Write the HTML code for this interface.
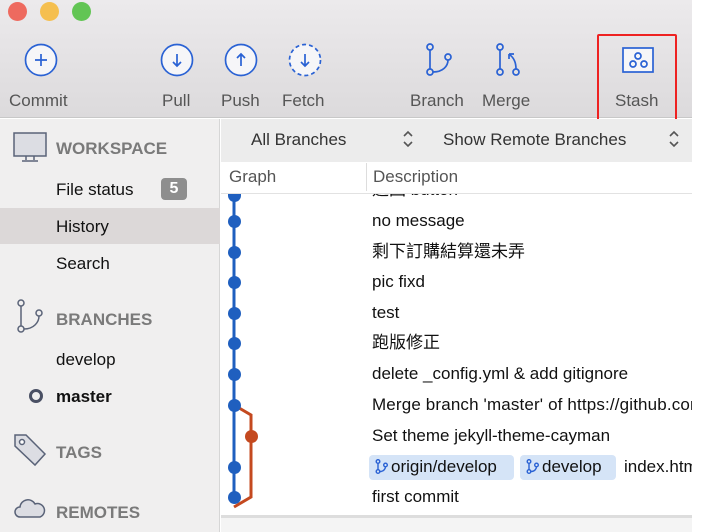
<!DOCTYPE html>
<html><head><meta charset="utf-8"><style>
*{margin:0;padding:0;box-sizing:border-box}
body{width:706px;height:532px;overflow:hidden;background:#fff;font-family:"Liberation Sans","Noto Sans CJK TC",sans-serif;position:relative}
.a{position:absolute}
#tb{left:0;top:0;width:692px;height:118px;background:linear-gradient(#eceaec,#dcdadc);border-bottom:1px solid #c8c8c8}
.lbl{font-size:17px;color:#555;top:91px}
#sb{left:0;top:119px;width:220px;height:413px;background:#f0efef;border-right:1px solid #d6d6d6}
.sh{font-size:17px;color:#7a7a7a;font-weight:bold;left:56px}
.si{font-size:17px;color:#111;left:56px}
.row{left:372px;font-size:17px;line-height:20px;height:20px;color:#111;white-space:nowrap}
.dot{width:13px;height:13px;border-radius:50%;background:#1f5fbf;left:228px}
.tag{background:#d5e4f7;border-radius:4px;height:25px;top:455px;font-size:17px;line-height:20px;color:#111;padding:2px 6px 0 6px;white-space:nowrap}
.tag svg{vertical-align:-2px;margin-right:3px}
</style></head><body>
<div id="tb" class="a">
 <div class="a" style="left:8px;top:2px;width:19px;height:19px;border-radius:50%;background:#ee6a5f"></div>
 <div class="a" style="left:40px;top:2px;width:19px;height:19px;border-radius:50%;background:#f5bf4f"></div>
 <div class="a" style="left:72px;top:2px;width:19px;height:19px;border-radius:50%;background:#62c554"></div>
 <svg class="a" style="left:0;top:40px" width="692" height="40" fill="none" stroke="#2a62d4" stroke-width="1.7">
  <circle cx="41" cy="20" r="15.5" fill="#f6f6f8"/><path d="M41 14v12M35 20h12"/>
  <circle cx="177" cy="20" r="15.5" fill="#f6f6f8"/><path d="M177 14v12M173 22l4 4 4-4"/>
  <circle cx="241" cy="20" r="15.5" fill="#f6f6f8"/><path d="M241 26v-12M237 18l4-4 4 4"/>
  <circle cx="305" cy="20" r="15.5" fill="#f6f6f8" stroke-dasharray="4 3"/><path d="M305 14v12M301 22l4 4 4-4"/>
  <circle cx="430" cy="7" r="3"/><circle cx="430" cy="32" r="3"/><circle cx="448" cy="17" r="3"/><path d="M430 10v19M433 32c10 0 15-6 15-12"/>
  <circle cx="500" cy="7" r="3"/><circle cx="500" cy="32" r="3"/><circle cx="516" cy="32" r="3"/><path d="M500 10v19M516 29c0-6-2-11-6-14M509 14v5M509 14h5"/>
  <rect x="623" y="8" width="30" height="24" fill="#f6f6f8"/><circle cx="638" cy="16" r="3"/><circle cx="633" cy="24" r="3"/><circle cx="644" cy="24" r="3"/>
 </svg>
 <div class="a lbl" style="left:9px">Commit</div>
 <div class="a lbl" style="left:162px">Pull</div>
 <div class="a lbl" style="left:221px">Push</div>
 <div class="a lbl" style="left:282px">Fetch</div>
 <div class="a lbl" style="left:410px">Branch</div>
 <div class="a lbl" style="left:482px">Merge</div>
 <div class="a lbl" style="left:615px">Stash</div>
 <div class="a" style="left:597px;top:34px;width:80px;height:87px;border:2px solid #ee2222;border-radius:2px"></div>
</div>
<div id="sb" class="a">
 <svg class="a" style="left:13px;top:13px" width="36" height="32" fill="#dcdde3" stroke="#5a6378" stroke-width="1.5"><rect x="1" y="1" width="32" height="23"/><path d="M13 24v4M21 24v4M9 29h16"/></svg>
 <div class="a sh" style="top:20px">WORKSPACE</div>
 <div class="a si" style="top:61px">File status</div>
 <div class="a" style="left:161px;top:59px;width:26px;height:22px;border-radius:4px;background:#8e8e8e;color:#fff;font-size:16px;font-weight:bold;text-align:center;line-height:22px">5</div>
 <div class="a" style="left:0;top:89px;width:220px;height:36px;background:#dcd8d8"></div>
 <div class="a si" style="top:98px">History</div>
 <div class="a si" style="top:135px">Search</div>
 <svg class="a" style="left:14px;top:180px" width="32" height="34" fill="none" stroke="#5a6378" stroke-width="1.5"><circle cx="7" cy="4" r="3"/><circle cx="7" cy="30" r="3"/><circle cx="25" cy="14" r="3"/><path d="M7 7v20M10 30c10 0 15-7 15-13"/></svg>
 <div class="a sh" style="top:191px">BRANCHES</div>
 <div class="a si" style="top:231px">develop</div>
 <div class="a" style="left:29px;top:270px;width:14px;height:14px;border-radius:50%;border:3px solid #4a5064"></div>
 <div class="a si" style="top:268px;font-weight:bold">master</div>
 <svg class="a" style="left:13px;top:313px" width="36" height="36" fill="#dcdde3" stroke="#5a6378" stroke-width="1.5"><path d="M2 3h11l19 19-10 11L2 14z"/><circle cx="9" cy="10" r="2.5" fill="#fff"/></svg>
 <div class="a sh" style="top:324px">TAGS</div>
 <svg class="a" style="left:14px;top:378px" width="32" height="22" fill="#dcdde3" stroke="#5a6378" stroke-width="1.5"><path d="M6 20a5 5 0 0 1 0-10 8 8 0 0 1 15-3 6 6 0 0 1 5 13z"/></svg>
 <div class="a sh" style="top:384px">REMOTES</div>
</div>
<div class="a" style="left:221px;top:119px;width:471px;height:43px;background:#ececec"></div>
<div class="a" style="left:251px;top:130px;font-size:17px;color:#333">All Branches</div>
<svg class="a" style="left:402px;top:130px" width="12" height="18" fill="none" stroke="#555" stroke-width="1.6"><path d="M2 6l4-4 4 4M2 12l4 4 4-4"/></svg>
<div class="a" style="left:443px;top:130px;font-size:17px;color:#333">Show Remote Branches</div>
<svg class="a" style="left:668px;top:130px" width="12" height="18" fill="none" stroke="#555" stroke-width="1.6"><path d="M2 6l4-4 4 4M2 12l4 4 4-4"/></svg>
<div class="a" style="left:221px;top:162px;width:471px;height:32px;background:#fff;border-bottom:1px solid #e2e2e2"></div>
<div class="a" style="left:366px;top:163px;width:1px;height:28px;background:#ddd"></div>
<div class="a" style="left:229px;top:167px;font-size:17px;color:#555">Graph</div>
<div class="a" style="left:373px;top:167px;font-size:17px;color:#555">Description</div>
<div class="a" style="left:221px;top:515px;width:471px;height:3px;background:#ddd"></div>
<div class="a" style="left:221px;top:518px;width:471px;height:14px;background:#f4f4f4"></div>
<svg class="a" style="left:221px;top:194px" width="60" height="320" fill="none" stroke-width="3">
 <path d="M13 0v303" stroke="#1f5fbf"/>
 <path d="M13 211l17 10v82l-17 10" stroke="#c4491f"/>
</svg>
<div class="a dot" style="height:8px;border-radius:0 0 7px 7px;top:194px"></div>
<div class="a dot" style="top:215px"></div>
<div class="a dot" style="top:246px"></div>
<div class="a dot" style="top:276px"></div>
<div class="a dot" style="top:307px"></div>
<div class="a dot" style="top:337px"></div>
<div class="a dot" style="top:368px"></div>
<div class="a dot" style="top:399px"></div>
<div class="a dot" style="left:245px;top:430px;background:#c4491f"></div>
<div class="a dot" style="top:461px"></div>
<div class="a dot" style="top:491px"></div>
<div class="a" style="left:368px;top:194px;width:200px;height:5px;overflow:hidden"><div style="margin-top:-14px;font-size:17px;line-height:20px;color:#111;padding-left:4px">返回 button</div></div>
<div class="a row" style="top:211px">no message</div>
<div class="a row" style="top:242px">剩下訂購結算還未弄</div>
<div class="a row" style="top:272px">pic fixd</div>
<div class="a row" style="top:303px">test</div>
<div class="a row" style="top:333px">跑版修正</div>
<div class="a row" style="top:364px">delete _config.yml &amp; add gitignore</div>
<div class="a row" style="top:395px;width:320px;overflow:hidden;letter-spacing:0.15px">Merge branch 'master' of https://github.com</div>
<div class="a row" style="top:426px">Set theme jekyll-theme-cayman</div>
<div class="a tag" style="left:369px;width:145px"><svg width="13" height="15" fill="none" stroke="#2a62d4" stroke-width="1.4"><circle cx="3" cy="2.5" r="1.8"/><circle cx="3" cy="12.5" r="1.8"/><circle cx="10.5" cy="6" r="1.8"/><path d="M3 4.5v6M5 12.5c4 0 5.5-3 5.5-5"/></svg>origin/develop</div>
<div class="a tag" style="left:520px;width:96px"><svg width="13" height="15" fill="none" stroke="#2a62d4" stroke-width="1.4"><circle cx="3" cy="2.5" r="1.8"/><circle cx="3" cy="12.5" r="1.8"/><circle cx="10.5" cy="6" r="1.8"/><path d="M3 4.5v6M5 12.5c4 0 5.5-3 5.5-5"/></svg>develop</div>
<div class="a row" style="left:624px;top:457px;width:68px;overflow:hidden">index.html</div>
<div class="a row" style="top:487px">first commit</div>
</body></html>
